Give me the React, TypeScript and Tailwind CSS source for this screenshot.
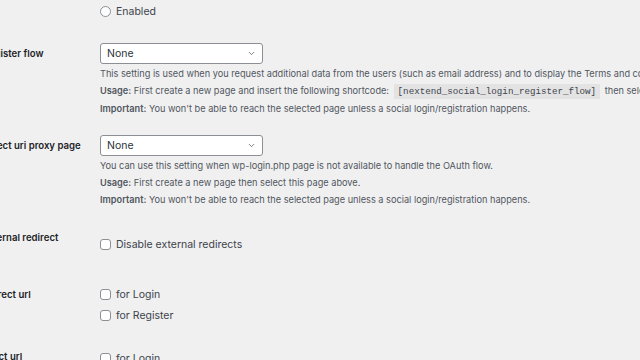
import { ChevronDown } from "lucide-react";

const font = { fontFamily: "Inter, 'Noto Sans', sans-serif" };

function Select() {
  return (
    <div className="flex h-[21px] w-[163px] items-center justify-between rounded-[3px] border border-[#8c8f94] bg-white pl-[6px] pr-[6px] text-[10.5px] text-[#2c3338]">
      <span>None</span>
      <ChevronDown className="size-[9px] text-[#50575e]" strokeWidth={2} />
    </div>
  );
}

function Checkbox({ label }: { label: string }) {
  return (
    <div className="flex h-[21px] items-center gap-[5px] text-[10.5px] text-[#3c434a]">
      <span className="size-[11px] rounded-[3px] border border-[#8c8f94] bg-white" />
      <span>{label}</span>
    </div>
  );
}

function Label({ text, top }: { text: string; top: string }) {
  return (
    <div className={`ml-[-56px] w-[156px] shrink-0 whitespace-nowrap text-[9.6px] font-semibold text-[#1d2327] ${top}`}>
      {text}
    </div>
  );
}

export default function App() {
  return (
    <div className="h-[360px] w-[640px] overflow-hidden bg-[#f0f0f1]" style={font}>
      {/* Debug mode radio (tail) */}
      <div className="flex pt-[1px]">
        <div className="w-[100px] shrink-0" />
        <div className="flex h-[21px] items-center gap-[5px] text-[10.5px] text-[#3c434a]">
          <span className="size-[11px] rounded-full border border-[#8c8f94] bg-white" />
          <span>Enabled</span>
        </div>
      </div>

      {/* Register flow page */}
      <div className="mt-[21px] flex">
        <Label text="Page for register flow" top="pt-[4px]" />
        <div className="flex flex-col whitespace-nowrap">
          <Select />
          <div className="mt-[1px] text-[9.2px] leading-[17px] text-[#50575e]">
            <p>
              This setting is used when you request additional data from the users (such as email address) and to display
              the Terms and conditions.
            </p>
            <p>
              <b className="font-semibold">Usage:</b> First create a new page and insert the following shortcode:{" "}
              <code className="mx-[2px] bg-[#e3e3e4] px-[4px] py-[2px] font-['Liberation_Mono',monospace] text-[9.2px] text-[#3c434a]">
                [nextend_social_login_register_flow]
              </code>{" "}
              then select this page above.
            </p>
            <p>
              <b className="font-semibold">Important:</b> You won't be able to reach the selected page unless a social
              login/registration happens.
            </p>
          </div>
        </div>
      </div>

      {/* OAuth redirect uri proxy page */}
      <div className="mt-[18px] flex">
        <Label text="OAuth redirect uri proxy page" top="pt-[4px]" />
        <div className="flex flex-col whitespace-nowrap">
          <Select />
          <div className="mt-[1px] text-[9.2px] leading-[17px] text-[#50575e]">
            <p>You can use this setting when wp-login.php page is not available to handle the OAuth flow.</p>
            <p>
              <b className="font-semibold">Usage:</b> First create a new page then select this page above.
            </p>
            <p>
              <b className="font-semibold">Important:</b> You won't be able to reach the selected page unless a social
              login/registration happens.
            </p>
          </div>
        </div>
      </div>

      {/* Prevent external redirect */}
      <div className="mt-[21px] flex">
        <Label text="Prevent external redirect" top="pt-[2px]" />
        <div className="flex flex-col pt-[5px]">
          <Checkbox label="Disable external redirects" />
        </div>
      </div>

      {/* Default redirect url */}
      <div className="mt-[29px] flex">
        <Label text="Default redirect url" top="pt-[4px]" />
        <div className="flex flex-col">
          <Checkbox label="for Login" />
          <Checkbox label="for Register" />
        </div>
      </div>

      {/* Fixed redirect url */}
      <div className="mt-[22px] flex">
        <Label text="Fixed redirect url" top="pt-[2px]" />
        <div className="flex flex-col">
          <Checkbox label="for Login" />
          <Checkbox label="for Register" />
        </div>
      </div>
    </div>
  );
}
